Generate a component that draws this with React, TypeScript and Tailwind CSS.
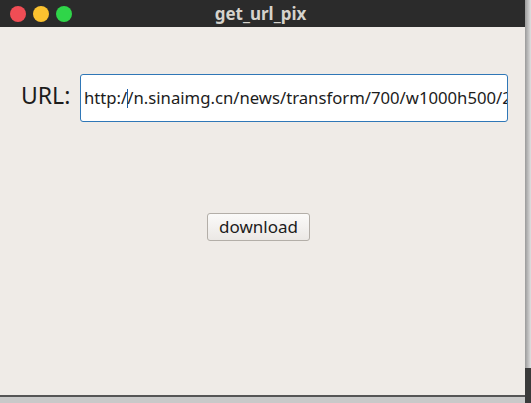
const FONT = { fontFamily: '"Noto Sans", "DejaVu Sans", sans-serif' };

export default function App() {
  return (
    <div className="w-[531px] h-[403px] flex overflow-hidden bg-[#c9c9c9]" style={FONT}>
      {/* Window */}
      <div className="w-[525px] h-[397px] flex flex-col border-b-2 border-[#555]">
        {/* Title bar */}
        <div className="h-[27px] bg-[#2b2b2b] flex items-center px-[10px] relative">
          <div className="flex gap-[7px]">
            <span className="w-4 h-4 rounded-full bg-[#f04d55]" />
            <span className="w-4 h-4 rounded-full bg-[#fbc22f]" />
            <span className="w-4 h-4 rounded-full bg-[#2fd549]" />
          </div>
          <span className="absolute left-0 right-0 pr-[4px] text-center text-[17px] font-bold text-[#d6d3cc]">
            get_url_pix
          </span>
        </div>

        {/* Body */}
        <div className="flex-1 bg-[#efebe7] flex flex-col">
          <div className="flex items-center mt-[47px] pl-[21px]">
            <span className="w-[59px] text-[23px] text-[#1c1c1c] -mt-[6px]">URL:</span>
            <div className="w-[428px] h-[48px] bg-white border border-[#2f77b7] rounded-[3px] flex items-center pl-[3px] overflow-hidden whitespace-nowrap text-[16.7px] text-[#1c1c1c]">
              <span>http:/</span>
              <span className="shrink-0 w-[1.5px] h-[19px] bg-[#1d5fa8] -ml-[0.5px] -mr-px" />
              <span>/n.sinaimg.cn/news/transform/700/w1000h500/2</span>
            </div>
          </div>

          <div className="flex justify-center mt-[91px] pr-[8px]">
            <button className="w-[103px] h-[28px] rounded-[3px] border border-[#b3aea8] bg-gradient-to-b from-[#fbfaf9] to-[#ebe8e5] text-[17px] text-[#1c1c1c]">
              download
            </button>
          </div>
        </div>
      </div>

      {/* Right edge */}
      <div className="flex-1 flex flex-col">
        <div className="flex-1 bg-gradient-to-r from-[#9a9a9a] to-[#e0e0e0]" />
        <div className="h-[35px] bg-[#3a3a3a]" />
      </div>
    </div>
  );
}
